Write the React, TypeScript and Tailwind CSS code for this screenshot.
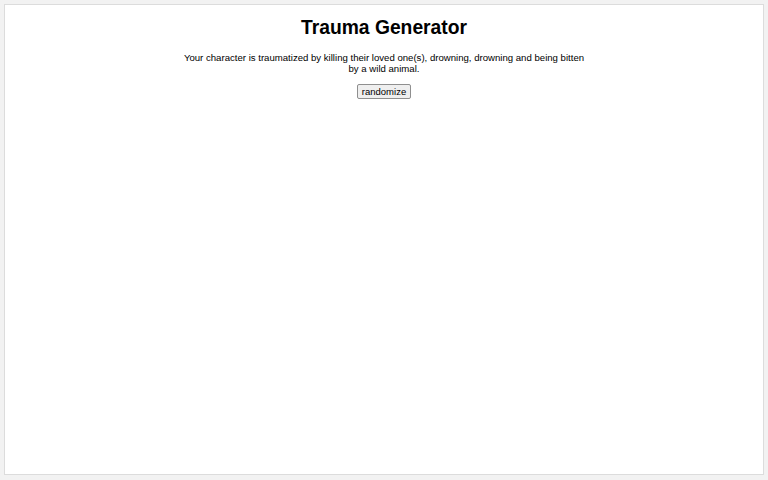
import { useState } from "react"

const causes = [
  "killing their loved one(s)",
  "drowning",
  "being bitten by a wild animal",
  "a house fire",
  "being abandoned",
  "a car accident",
  "falling from a height",
]

function pick() {
  return causes[Math.floor(Math.random() * causes.length)]
}

export default function App() {
  const [text, setText] = useState(
    "killing their loved one(s), drowning, drowning and being bitten by a wild animal"
  )

  const randomize = () => {
    const a = pick()
    const b = pick()
    const c = pick()
    const d = pick()
    setText(`${a}, ${b}, ${c} and ${d}`)
  }

  return (
    <div className="h-screen bg-[#f2f2f2] p-[4px] font-['Liberation_Sans',Arial,sans-serif] text-black">
      <div className="h-[471px] border border-[#dcdcdc] bg-white flex flex-col items-center">
        <h1 className="mt-[12px] text-[19.3px] leading-[22px] font-bold">Trauma Generator</h1>
        <p className="mt-[13px] w-[406px] text-center text-[9.6px] leading-[11px]">
          Your character is traumatized by {text}.
        </p>
        <button
          onClick={randomize}
          className="mt-[10px] h-[15px] px-[4px] text-[9.5px] leading-[12px] border border-[#8f8f8f] rounded-[2px] bg-[#efefef]"
        >
          randomize
        </button>
      </div>
    </div>
  )
}
